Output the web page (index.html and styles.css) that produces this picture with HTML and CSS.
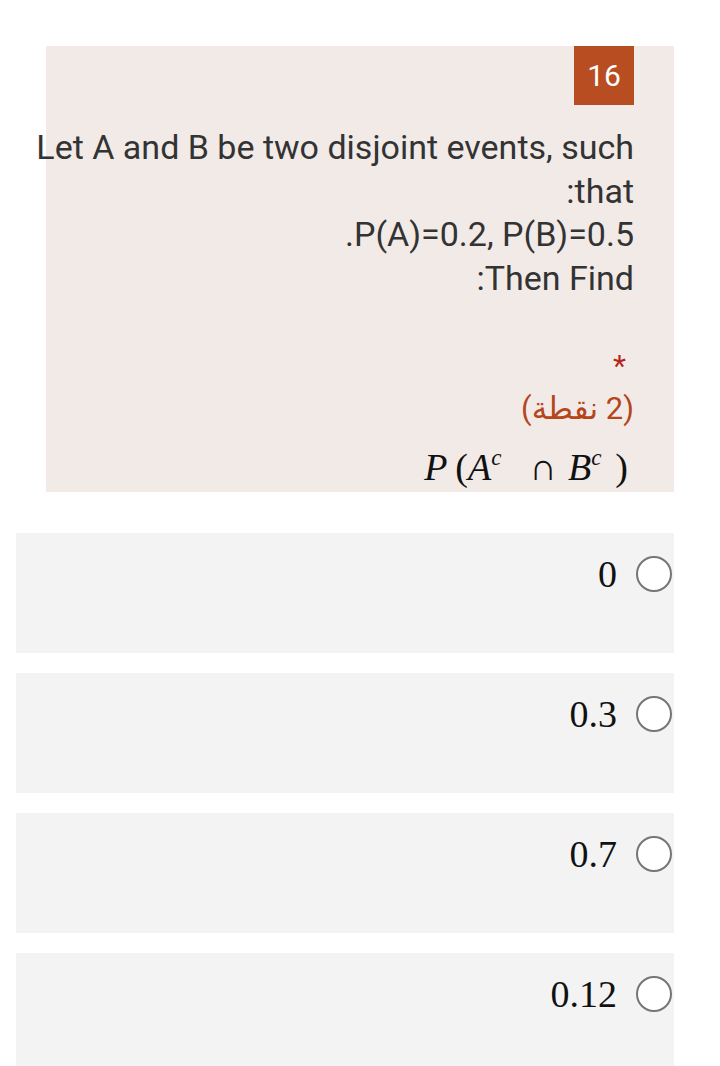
FILE: index.html
```html
<!DOCTYPE html>
<html>
<head>
<meta charset="utf-8">
<link rel="stylesheet" href="styles.css">
</head>
<body>
<div class="page">
  <div class="question">
    <div class="badge-row"><div class="badge">16</div></div>
    <div class="title">
      <div class="line" dir="rtl">Let A and B be two disjoint events, such</div>
      <div class="line" dir="rtl">that:</div>
      <div class="line" dir="rtl">P(A)=0.2, P(B)=0.5.</div>
      <div class="line" dir="rtl">Then Find:</div>
      <div class="line blank">&nbsp;</div>
      <div class="line star">*</div>
      <div class="line points" dir="rtl">(2 نقطة)</div>
    </div>
    <div class="math"><i>P</i><span class="sp1"></span>(<i>A</i><sup><i>c</i></sup><span class="sp2"></span>∩<span class="sp3"></span><i>B</i><sup><i>c</i></sup><span class="sp4"></span>)</div>
  </div>
  <div class="options">
    <div class="option"><span class="val">0</span><span class="radio"></span></div>
    <div class="option"><span class="val">0.3</span><span class="radio"></span></div>
    <div class="option"><span class="val">0.7</span><span class="radio"></span></div>
    <div class="option"><span class="val">0.12</span><span class="radio"></span></div>
  </div>
</div>
</body>
</html>
```
FILE: styles.css
```css
html, body {
  margin: 0;
  padding: 0;
  background: #ffffff;
}
.page {
  padding-top: 46px;
  width: 720px;
}
.question {
  margin-left: 46px;
  width: 628px;
  background: #f2eae7;
  box-sizing: border-box;
  padding-right: 40px;
}
.badge-row {
  display: flex;
  justify-content: flex-end;
}
.badge {
  width: 60px;
  height: 59px;
  background: #b94d22;
  color: #ffffff;
  font-family: Roboto, "Liberation Sans", sans-serif;
  font-size: 30px;
  display: flex;
  align-items: center;
  justify-content: center;
}
.title {
  margin-top: 21px;
  font-family: Roboto, "DejaVu Sans", sans-serif;
  font-size: 34px;
  line-height: 43.5px;
  color: #333333;
}
.line {
  direction: rtl;
  text-align: right;
  white-space: nowrap;
}
.star {
  color: #b3261e;
  font-size: 30px;
  padding-right: 8px;
}
.points {
  color: #b5461c;
  font-size: 31px;
}
.math {
  text-align: right;
  font-family: "Liberation Serif", serif;
  font-size: 38px;
  line-height: 38px;
  color: #111111;
  padding-right: 6px;
  padding-top: 17px;
  padding-bottom: 6px;
}
.math sup {
  font-size: 23px;
  vertical-align: 15px;
  line-height: 0;
}
.sp1 { display: inline-block; width: 8px; }
.sp2 { display: inline-block; width: 28px; }
.sp3 { display: inline-block; width: 11px; }
.sp4 { display: inline-block; width: 14px; }
.options {
  margin-top: 41px;
  margin-left: 16px;
  width: 658px;
  display: flex;
  flex-direction: column;
  gap: 20px;
}
.option {
  height: 120px;
  background: #f3f3f3;
  box-sizing: border-box;
  padding-top: 23px;
  padding-right: 2px;
  display: flex;
  justify-content: flex-end;
  align-items: flex-start;
  gap: 19px;
}
.val {
  font-family: "Liberation Serif", serif;
  font-size: 38px;
  line-height: 36px;
  color: #111111;
}
.radio {
  width: 36px;
  height: 36px;
  box-sizing: border-box;
  border: 2px solid #757575;
  border-radius: 50%;
  background: #ffffff;
}
```
